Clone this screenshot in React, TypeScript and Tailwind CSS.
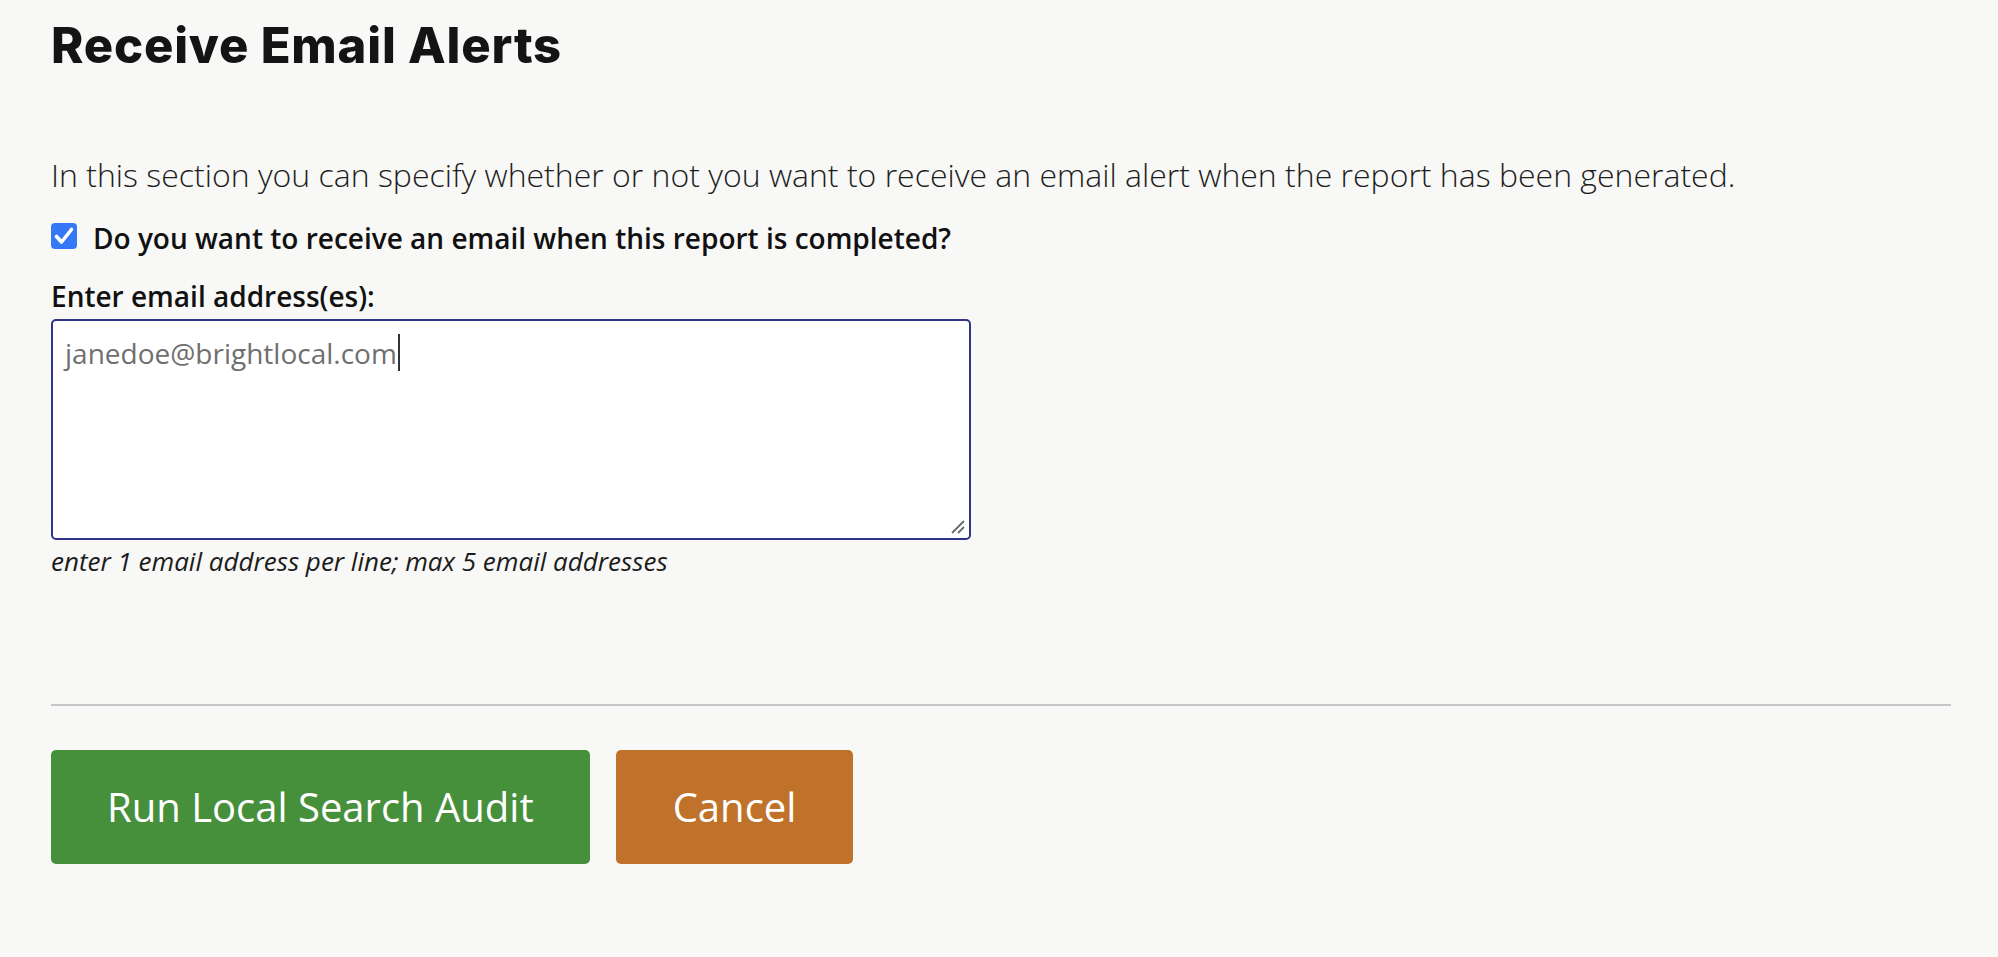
import React from "react";

export default function App() {
  return (
    <div
      className="min-h-screen w-full bg-[#f8f8f6] pl-[51px] pr-[47px] text-[#1c1c1c]"
      style={{ fontFamily: '"Open Sans", "Noto Sans", sans-serif' }}
    >
      <h2
        className="pt-[16px] text-[49px] font-extrabold leading-[60px] tracking-[0.8px] text-[#141414]"
        style={{ fontFamily: 'Inter, "Open Sans", sans-serif' }}
      >
        Receive Email Alerts
      </h2>

      <p className="mt-[77px] text-[32px] font-light leading-[44px] text-[#1e1e1e]">
        In this section you can specify whether or not you want to receive an email alert when the report has been generated.
      </p>

      <label className="mt-[22px] flex items-start gap-[16px]">
        <span className="mt-[4px] flex h-[26px] w-[26px] shrink-0 items-center justify-center rounded-[4px] bg-[#3478f6]">
          <svg width="26" height="26" viewBox="0 0 26 26" fill="none">
            <path d="M5.5 13.5 L10.5 19 L20.5 6.5" stroke="#fff" strokeWidth="3.6" strokeLinecap="round" strokeLinejoin="round" />
          </svg>
        </span>
        <span className="text-[28px] font-semibold leading-[38px] text-[#111]">
          Do you want to receive an email when this report is completed?
        </span>
      </label>

      <div className="mt-[20px] text-[28px] font-semibold leading-[38px] text-[#111]">
        Enter email address(es):
      </div>

      <div className="relative mt-[4px] h-[221px] w-[920px] rounded-[5px] border-2 border-[#30358a] bg-white pl-[12px] pt-[6px]">
        <div className="text-[28px] leading-[38px] text-[#6f6f6f]">
          janedoe@brightlocal.com
          <span className="ml-[1px] inline-block h-[37px] w-[2px] translate-y-[7px] bg-[#333]" />
        </div>
        <svg className="absolute bottom-[3px] right-[3px]" width="16" height="16" viewBox="0 0 16 16">
          <path d="M14 2 L2 14 M14 8 L8 14" stroke="#6b6b6b" strokeWidth="1.8" />
        </svg>
      </div>

      <div className="mt-[4px] text-[26px] italic leading-[34px] text-[#1c1c1c]">
        enter 1 email address per line; max 5 email addresses
      </div>

      <div className="mt-[126px] h-[2px] w-full bg-[#c6c6c6]" />

      <div className="mt-[44px] flex gap-[26px]">
        <button className="flex h-[114px] items-center rounded-[5px] bg-[#46903c] px-[56px] text-[40px] leading-none text-white">
          Run Local Search Audit
        </button>
        <button className="flex h-[114px] items-center rounded-[5px] bg-[#c0722a] px-[57px] text-[40px] leading-none text-white">
          Cancel
        </button>
      </div>
    </div>
  );
}
